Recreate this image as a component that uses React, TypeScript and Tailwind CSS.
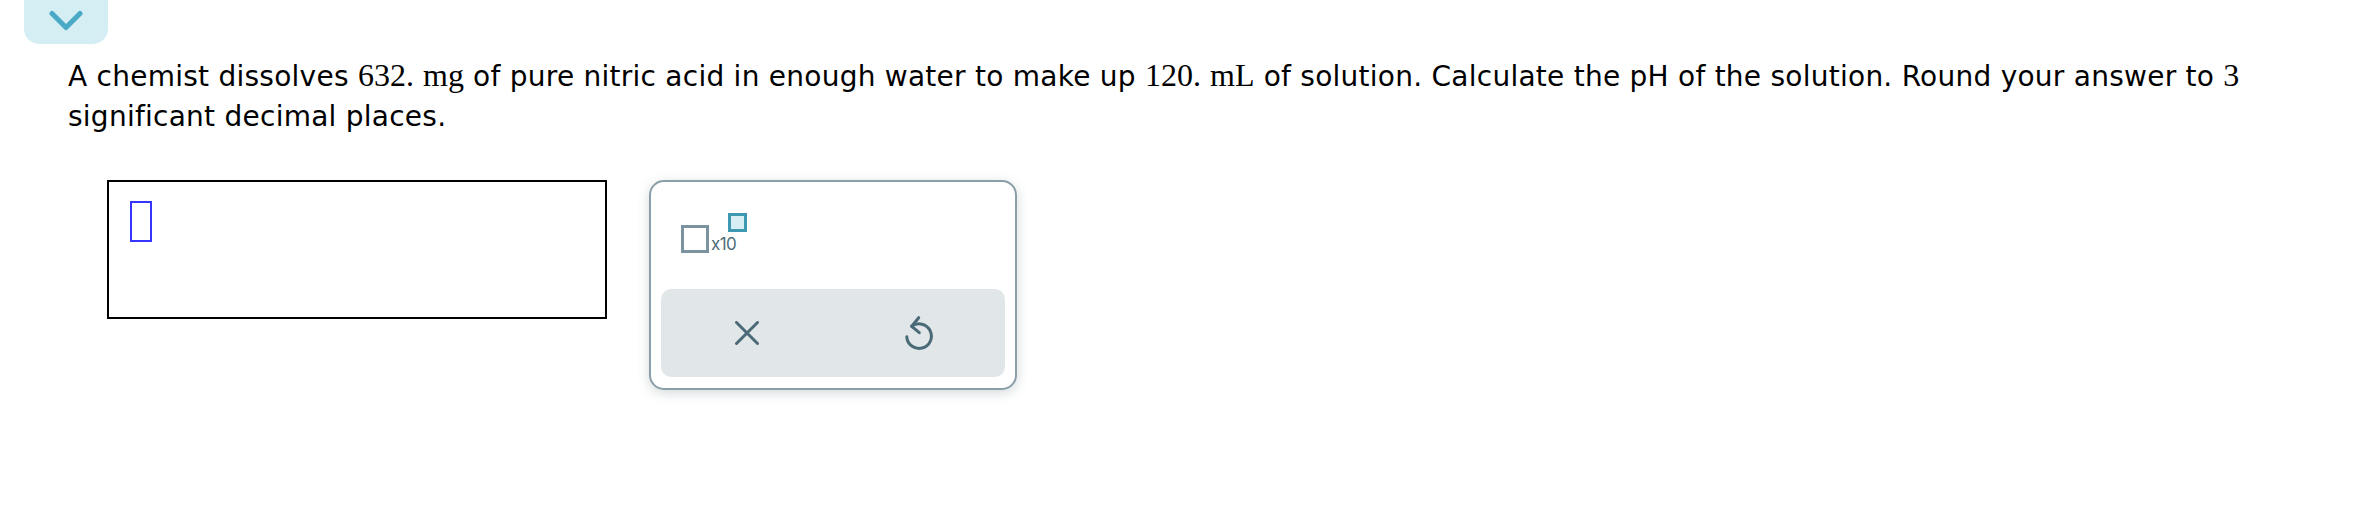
import React from "react";

const Serif = ({ children }: { children: React.ReactNode }) => (
  <span className="font-['Liberation_Serif','Times_New_Roman',serif] text-[32px] tracking-normal">{children}</span>
);

export default function App() {
  return (
    <div className="min-h-[505px] bg-white text-black">
      <div className="pl-[24px]">
        <button className="flex h-[44px] w-[84px] items-start justify-center rounded-b-[15px] bg-[#d5eef4] pt-[10px]">
          <svg width="36" height="22" viewBox="0 0 36 22" fill="none">
            <path d="M4 3.5 L18 17.5 L32 3.5" stroke="#4aa9c5" strokeWidth="5" strokeLinecap="round" strokeLinejoin="round" />
          </svg>
        </button>
      </div>
      <p className="ml-[68px] mt-[11px] font-['DejaVu_Sans','Verdana',sans-serif] text-[28px] leading-[40px] tracking-[0.25px]">
        A chemist dissolves <Serif>632.</Serif> <Serif>mg</Serif> of pure nitric acid in enough water to make up{" "}
        <Serif>120.</Serif> <Serif>mL</Serif> of solution. Calculate the pH of the solution. Round your answer to{" "}
        <Serif>3</Serif>
        <br />
        significant decimal places.
      </p>
      <div className="ml-[107px] mt-[43px] flex items-start gap-[42px]">
        <div className="h-[139px] w-[500px] border-2 border-black pl-[21px] pt-[19px]">
          <div className="h-[41px] w-[22px] border-2 border-[#3535ff]" />
        </div>
        <div className="flex h-[210px] w-[368px] flex-col rounded-[15px] border-2 border-[#8a9fa9] bg-white shadow-[0_3px_12px_rgba(60,80,90,0.22)]">
          <div className="h-[107px] pl-[30px] pt-[31px]">
            <div className="flex items-start">
              <div className="mt-[12px] h-[28px] w-[28px] border-[3px] border-[#7b939e]" />
              <span className="ml-[2px] mt-[23px] font-['Inter',sans-serif] text-[17px] leading-[16px] tracking-[-0.6px] text-[#4e6e7a]">
                x10
              </span>
              <div className="ml-[-8px] h-[19px] w-[19px] border-[3px] border-[#3e98b1] bg-[#d6eef4]" />
            </div>
          </div>
          <div className="mx-[10px] flex h-[88px] rounded-[10px] bg-[#e1e6e9]">
            <button className="flex flex-1 items-center justify-center">
              <svg width="24" height="24" viewBox="0 0 24 24" fill="none">
                <path d="M1.5 1.5 L22.5 22.5 M22.5 1.5 L1.5 22.5" stroke="#4a6a77" strokeWidth="3" strokeLinecap="round" />
              </svg>
            </button>
            <button className="flex flex-1 items-center justify-center">
              <svg width="28" height="36" viewBox="0 0 28 36" fill="none">
                <path d="M13.7 2.7 L6.7 11.3 L14.3 17.7" stroke="#4a6a77" strokeWidth="3" strokeLinecap="round" strokeLinejoin="round" />
                <path d="M6.7 11.3 A12.3 12.3 0 1 1 1.8 21.8" stroke="#4a6a77" strokeWidth="3" strokeLinecap="round" />
              </svg>
            </button>
          </div>
        </div>
      </div>
    </div>
  );
}
